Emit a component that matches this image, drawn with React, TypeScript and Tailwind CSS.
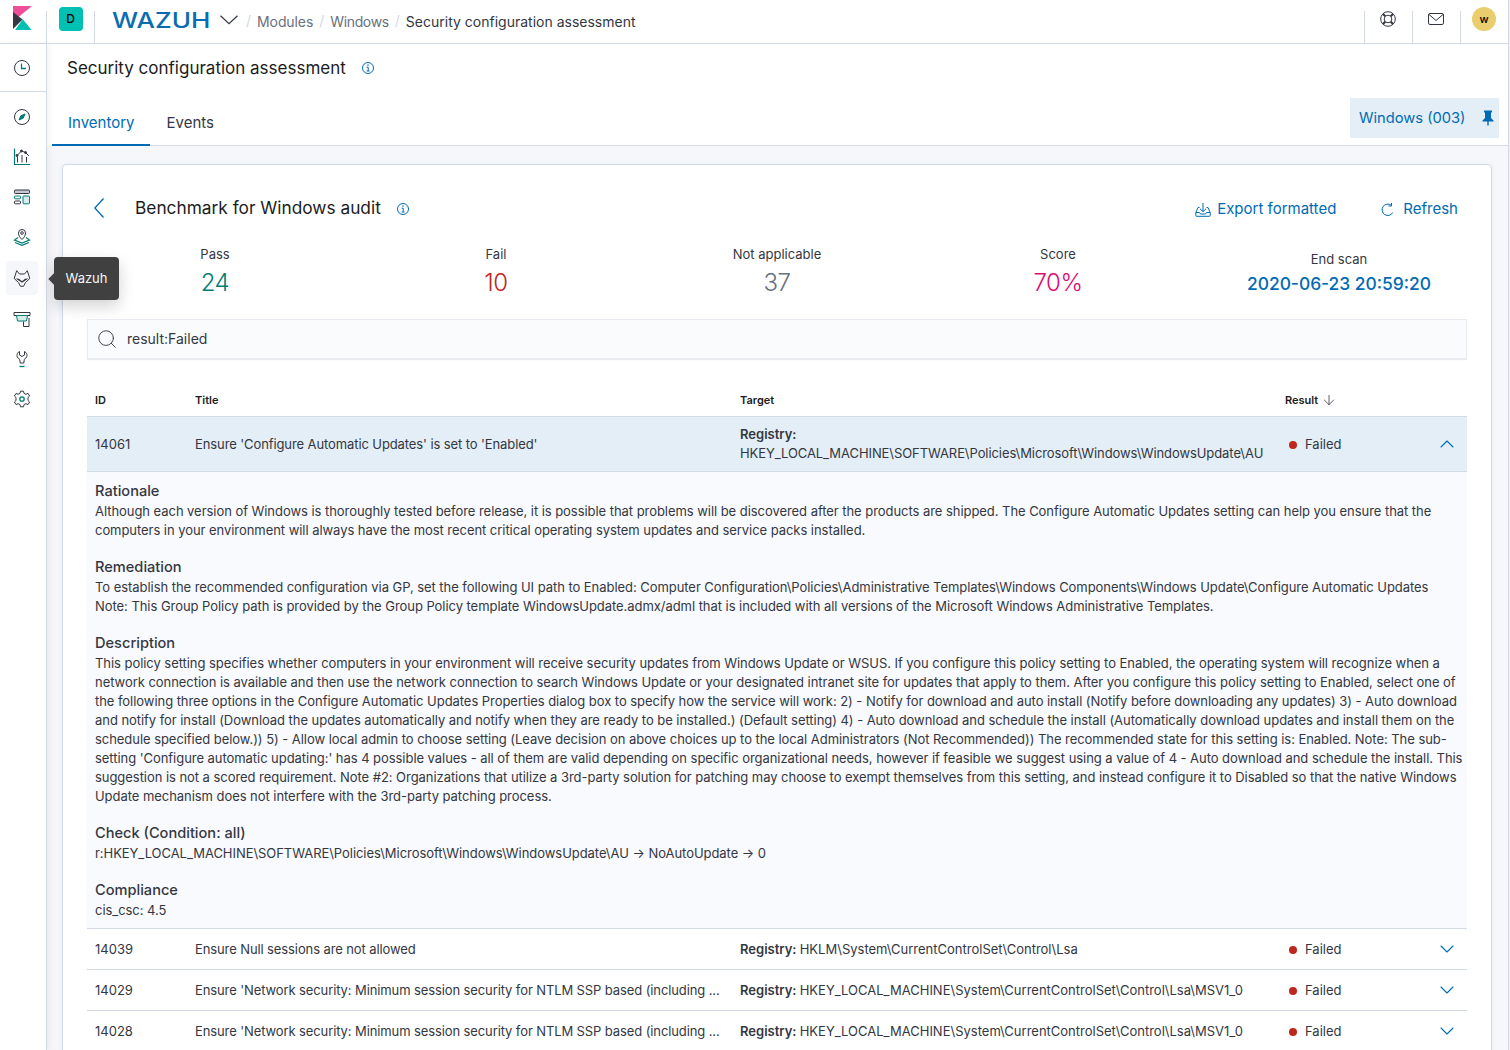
import { ArrowDown, ChevronDown, ChevronUp, Search as SearchIcon } from "lucide-react";

const font = { fontFamily: "Inter, 'Noto Sans', sans-serif" };

const sections = [
  {
    title: "Rationale",
    lines: [
      "Although each version of Windows is thoroughly tested before release, it is possible that problems will be discovered after the products are shipped. The Configure Automatic Updates setting can help you ensure that the computers in your environment will always have the most recent critical operating system updates and service packs installed.",
    ],
  },
  {
    title: "Remediation",
    lines: [
      "To establish the recommended configuration via GP, set the following UI path to Enabled: Computer Configuration\\Policies\\Administrative Templates\\Windows Components\\Windows Update\\Configure Automatic Updates",
      "Note: This Group Policy path is provided by the Group Policy template WindowsUpdate.admx/adml that is included with all versions of the Microsoft Windows Administrative Templates.",
    ],
  },
  {
    title: "Description",
    lines: [
      "This policy setting specifies whether computers in your environment will receive security updates from Windows Update or WSUS. If you configure this policy setting to Enabled, the operating system will recognize when a network connection is available and then use the network connection to search Windows Update or your designated intranet site for updates that apply to them. After you configure this policy setting to Enabled, select one of the following three options in the Configure Automatic Updates Properties dialog box to specify how the service will work: 2) - Notify for download and auto install (Notify before downloading any updates) 3) - Auto download and notify for install (Download the updates automatically and notify when they are ready to be installed.) (Default setting) 4) - Auto download and schedule the install (Automatically download updates and install them on the schedule specified below.)) 5) - Allow local admin to choose setting (Leave decision on above choices up to the local Administrators (Not Recommended)) The recommended state for this setting is: Enabled. Note: The sub-setting 'Configure automatic updating:' has 4 possible values - all of them are valid depending on specific organizational needs, however if feasible we suggest using a value of 4 - Auto download and schedule the install. This suggestion is not a scored requirement. Note #2: Organizations that utilize a 3rd-party solution for patching may choose to exempt themselves from this setting, and instead configure it to Disabled so that the native Windows Update mechanism does not interfere with the 3rd-party patching process.",
    ],
  },
  {
    title: "Check (Condition: all)",
    lines: ["r:HKEY_LOCAL_MACHINE\\SOFTWARE\\Policies\\Microsoft\\Windows\\WindowsUpdate\\AU → NoAutoUpdate → 0"],
  },
  { title: "Compliance", lines: ["cis_csc: 4.5"] },
];

const rows = [
  { id: "14039", title: "Ensure Null sessions are not allowed", target: "HKLM\\System\\CurrentControlSet\\Control\\Lsa" },
  {
    id: "14029",
    title: "Ensure 'Network security: Minimum session security for NTLM SSP based (including ...",
    target: "HKEY_LOCAL_MACHINE\\System\\CurrentControlSet\\Control\\Lsa\\MSV1_0",
  },
  {
    id: "14028",
    title: "Ensure 'Network security: Minimum session security for NTLM SSP based (including ...",
    target: "HKEY_LOCAL_MACHINE\\System\\CurrentControlSet\\Control\\Lsa\\MSV1_0",
  },
];

function InfoIcon() {
  return (
    <svg width="14" height="14" viewBox="0 0 14 14" fill="none" stroke="#006bb4">
      <circle cx="7" cy="7" r="5.5" />
      <path d="M5.6 6.2H7.2V10M5.6 10H8.6" />
      <path d="M7 3.6v1.2" strokeWidth="1.4" />
    </svg>
  );
}

function KibanaLogo() {
  return (
    <svg width="20" height="24" viewBox="0 0 20 24">
      <path d="M0 0H19L0 15.5Z" fill="#f04e98" />
      <path d="M0 6V23L9.5 13.5Z" fill="#343741" />
      <path d="M2 24 9.8 13.2 18.5 24Z" fill="#00bfb3" />
    </svg>
  );
}

function NavIcon({ name }: { name: string }) {
  const dark = "#343741";
  const teal = "#017d73";
  const common = { width: 18, height: 18, viewBox: "0 0 18 18", fill: "none", stroke: dark, strokeWidth: 1 };
  if (name === "clock")
    return (
      <svg {...common}>
        <circle cx="9" cy="9" r="7.5" />
        <path d="M8.5 4.5V9.5H13" stroke={teal} strokeWidth="1.3" />
      </svg>
    );
  if (name === "compass")
    return (
      <svg {...common}>
        <circle cx="9" cy="9" r="7.5" />
        <path d="M12 6 10.2 10.2 6 12 7.8 7.8Z" fill={teal} stroke={teal} />
      </svg>
    );
  if (name === "chart")
    return (
      <svg {...common}>
        <path d="M1.5 0.500V16.5H17" stroke={teal} strokeWidth="1.200" />
        <path d="M4.500 14.500V9M9 14.500V7M13.500 14.500V9" />
        <path d="M4 7.500 8.500 3 12.500 4.500 16 8" />
        <circle cx="4" cy="7.500" r="1" fill={dark} />
        <circle cx="8.500" cy="3" r="1" fill={dark} />
        <circle cx="12.500" cy="4.500" r="1" fill={dark} />
      </svg>
    );
  if (name === "dashboard")
    return (
      <svg {...common}>
        <rect x="1.5" y="2" width="15" height="3.5" rx="0.8" fill="#c4c8d0" />
        <rect x="1.5" y="8" width="6" height="2.8" rx="0.8" stroke={teal} />
        <rect x="1.5" y="13" width="6" height="2.8" rx="0.8" />
        <rect x="10" y="8" width="6.5" height="7.8" rx="0.8" stroke={teal} fill="#d6ecea" />
      </svg>
    );
  if (name === "map")
    return (
      <svg {...common}>
        <path d="M9 11.5C7 9.5 5.5 7.8 5.5 5A3.500 3.500 0 0 1 12.500 5C12.500 7.800 11 9.500 9 11.500Z" />
        <circle cx="9" cy="5" r="1.300" />
        <path d="M5 9.500 1.500 12 9 15 16.500 12 13 9.500M2 14.500 9 17.300 16 14.500" stroke={teal} strokeWidth="1.200" />
      </svg>
    );
  if (name === "wazuh")
    return (
      <svg {...common}>
        <path d="M3.700 1.700 6.500 5H11.500L14.300 1.700 16.800 9.500 12.500 13.500 10.500 17.300H7.500L5.500 13.500 1.200 9.500Z" />
        <path d="M2.500 9.500 6 9.800 9 12.300 12 9.800 15.500 9.500 12 11.800 9 13.800 6 11.800Z" fill={dark} stroke="none" />
      </svg>
    );
  if (name === "devices")
    return (
      <svg {...common}>
        <path d="M1 2.500H17V5.500H1Z" />
        <path d="M3.500 5.500H14.500L13.500 11H4.500Z" fill="#d6ecea" stroke={teal} />
        <path d="M10.500 11.500V16.500H16V8" />
      </svg>
    );
  if (name === "wrench")
    return (
      <svg {...common}>
        <path d="M6.500 1.500C4.500 2.500 4 4 4 5.500 4 7.500 5.500 8.500 6.700 9.300L7.200 13H10.800L11.300 9.300C12.500 8.500 14 7.500 14 5.500 14 4 13.500 2.500 11.500 1.500V5L9 6.500 6.500 5Z" />
        <path d="M6.500 16.500H11.500" stroke={teal} strokeWidth="1.300" />
      </svg>
    );
  return (
    <svg {...common}>
      <path d="M7.500 1.200H10.500L11 3.400 12.900 4.300 15 3.400 16.600 6 15 7.500V10.500L16.600 12 15 14.600 12.900 13.700 11 14.600 10.500 16.800H7.500L7 14.600 5.100 13.700 3 14.600 1.400 12 3 10.500V7.500L1.400 6 3 3.400 5.100 4.300 7 3.400Z" />
      <circle cx="9" cy="9" r="2.200" stroke={teal} strokeWidth="1.300" />
    </svg>
  );
}

function Sidebar() {
  return (
    <aside className="relative z-10 flex h-full w-[47px] shrink-0 flex-col items-start border-r border-[#d3dae6] bg-white shadow-[2px_0_6px_rgba(152,162,179,0.15)]">
      <div className="flex h-[48px] w-full items-center justify-center border-b border-[#d3dae6] pr-[2px]">
        <NavIcon name="clock" />
      </div>
      <div className="ml-[6px] mt-[8px] flex h-[34px] w-[32px] items-center justify-center">
        <NavIcon name="compass" />
      </div>
      <div className="ml-[6px] mt-[6px] flex h-[34px] w-[32px] items-center justify-center">
        <NavIcon name="chart" />
      </div>
      <div className="ml-[6px] mt-[6px] flex h-[34px] w-[32px] items-center justify-center">
        <NavIcon name="dashboard" />
      </div>
      <div className="ml-[6px] mt-[6px] flex h-[34px] w-[32px] items-center justify-center">
        <NavIcon name="map" />
      </div>
      <div className="ml-[6px] mt-[7px] flex h-[34px] w-[32px] items-center justify-center rounded bg-[#f5f7fa]">
        <NavIcon name="wazuh" />
      </div>
      <div className="ml-[6px] mt-[7px] flex h-[34px] w-[32px] items-center justify-center">
        <NavIcon name="devices" />
      </div>
      <div className="ml-[6px] mt-[6px] flex h-[34px] w-[32px] items-center justify-center">
        <NavIcon name="wrench" />
      </div>
      <div className="ml-[6px] mt-[6px] flex h-[34px] w-[32px] items-center justify-center">
        <NavIcon name="gear" />
      </div>
      <div className="absolute left-[54px] top-[213px] flex h-[43px] w-[65px] items-center justify-center rounded bg-[#404040] text-[13px] text-[#f5f7fa] shadow-[0_6px_16px_rgba(0,0,0,0.18)]">
        <span className="absolute left-[-4px] top-[18px] h-[8px] w-[8px] rotate-45 bg-[#404040]" />
        Wazuh
      </div>
    </aside>
  );
}

function TopBar() {
  return (
    <header className="flex h-[44px] shrink-0 items-stretch border-b border-[#d3dae6] bg-white">
      <div className="flex w-[46px] items-start justify-start pl-[13px] pt-[6px]">
        <KibanaLogo />
      </div>
      <div className="mt-[11px] w-px bg-[#d3dae6]" />
      <div className="flex w-[47px] items-start justify-center pt-[7px]">
        <div className="flex h-[24px] w-[24px] items-center justify-center rounded bg-[#00bfb3] text-[12px] font-medium text-black">
          D
        </div>
      </div>
      <div className="mt-[11px] w-px bg-[#d3dae6]" />
      <div className="flex items-center pb-[3px] pl-[17px]">
        <span className="w-[98px] origin-left scale-x-[1.24] text-[21px] font-medium leading-none text-[#0a6cb0]">
          WAZUH
        </span>
        <svg className="ml-[10px]" width="18" height="10" viewBox="0 0 18 10" fill="none" stroke="#343741" strokeWidth="1.200">
          <path d="M0.500 0.800 9 8.800 17.500 0.800" />
        </svg>
        <span className="ml-[8px] text-[14px] text-[#d3dae6]">/</span>
        <span className="ml-[6px] pt-[3px] text-[14px] tracking-[-0.1px] text-[#69707d]">Modules</span>
        <span className="ml-[6px] text-[14px] text-[#d3dae6]">/</span>
        <span className="ml-[6px] pt-[3px] text-[14px] tracking-[-0.35px] text-[#69707d]">Windows</span>
        <span className="ml-[6px] text-[14px] text-[#d3dae6]">/</span>
        <span className="ml-[6px] pt-[3px] text-[14px] text-[#343741]">Security configuration assessment</span>
      </div>
      <div className="ml-auto flex items-stretch">
        <div className="mt-[11px] w-px bg-[#d3dae6]" />
        <div className="flex w-[47px] items-start justify-center pr-[2px] pt-[11px]">
          <svg width="16" height="16" viewBox="0 0 16 16" fill="none" stroke="#343741">
            <circle cx="8" cy="8" r="7.300" />
            <circle cx="8" cy="8" r="3.800" />
            <path d="M3 3 5.300 5.300M13 3 10.700 5.300M3 13 5.300 10.700M13 13 10.700 10.700" strokeWidth="2" />
          </svg>
        </div>
        <div className="mt-[11px] w-px bg-[#d3dae6]" />
        <div className="flex w-[47px] items-start justify-center pr-[2px] pt-[13px]">
          <svg width="16" height="12" viewBox="0 0 16 12" fill="none" stroke="#343741">
            <rect x="0.500" y="0.500" width="15" height="11" rx="1.500" />
            <path d="M1 1.500 8 7.500 15 1.500" />
          </svg>
        </div>
        <div className="mt-[11px] w-px bg-[#d3dae6]" />
        <div className="flex w-[47px] items-start justify-center pr-[1px] pt-[7px]">
          <div className="flex h-[24px] w-[24px] items-center justify-center rounded-full bg-[#eacd6c] text-[11px] font-medium text-black">
            w
          </div>
        </div>
      </div>
    </header>
  );
}

function PageHead() {
  return (
    <div className="bg-white pl-[5px]">
      <div className="flex h-[56px] items-center pb-[8px] pl-[15px]">
        <h1 className="text-[17px] leading-[24px] text-[#1a1c21]">Security configuration assessment</h1>
        <span className="ml-[15px]">
          <InfoIcon />
        </span>
      </div>
      <div className="flex h-[46px] items-start justify-between border-b border-[#d3dae6] pr-[9px]">
        <div className="flex">
          <div className="flex h-[46px] items-center border-b-2 border-[#006bb4] px-[16px] pt-[2px] text-[15px] text-[#006bb4]">
            Inventory
          </div>
          <div className="flex h-[46px] items-center border-b-2 border-transparent px-[16px] pt-[2px] text-[15px] text-[#343741]">
            Events
          </div>
        </div>
        <div className="-mt-[2px] flex h-[40px] w-[149px] items-center justify-between bg-[#e3eef6] pl-[9px] pr-[5px] text-[14.700px] text-[#006bb4]">
          Windows (003)
          <svg width="12" height="16" viewBox="0 0 12 16" fill="#006bb4">
            <path d="M2 0.500H10V2L9 3V8L11.500 10.500V11.500H6.700V15.500H5.300V11.500H0.500V10.500L3 8V3L2 2Z" />
          </svg>
        </div>
      </div>
    </div>
  );
}

function Stats() {
  const items = [
    { label: "Pass", value: "24", cls: "text-[#017d73]" },
    { label: "Fail", value: "10", cls: "text-[#bd271e]" },
    { label: "Not applicable", value: "37", cls: "text-[#69707d]" },
    { label: "Score", value: "70%", cls: "text-[#dd0a73]" },
  ];
  return (
    <div className="-mx-[12.500px] mt-[18px] grid grid-cols-5">
      {items.map((s) => (
        <div key={s.label} className="flex flex-col items-center">
          <div className="h-[18px] text-[13px] leading-[18px] text-[#343741]">{s.label}</div>
          <div className={`mt-[2px] text-[24px] font-light leading-[36px] tracking-[-0.5px] ${s.cls}`}>{s.value}</div>
        </div>
      ))}
      <div className="flex flex-col items-center pt-[5px]">
        <div className="h-[18px] text-[13px] leading-[18px] text-[#343741]">End scan</div>
        <div className="mt-[1px] text-[17.400px] font-medium leading-[30px] text-[#006bb4]">2020-06-23 20:59:20</div>
      </div>
    </div>
  );
}

function FailedCell() {
  return (
    <div className="flex items-center pl-[4px] text-[#343741]">
      <span className="h-[8px] w-[8px] rounded-full bg-[#bd271e]" />
      <span className="ml-[8px]">Failed</span>
    </div>
  );
}

function Table() {
  const cols = "grid grid-cols-[100px_545px_545px_1fr] pl-[8px]";
  return (
    <div className="mt-[22px] text-[13px] text-[#343741]">
      <div className={`${cols} h-[36px] items-center border-b border-[#d3dae6] pt-[3px] text-[11px] font-semibold text-[#1a1c21]`}>
        <div>ID</div>
        <div>Title</div>
        <div>Target</div>
        <div className="flex items-center">
          Result
          <ArrowDown size={16} strokeWidth={1.2} className="ml-[3px] text-[#343741]" />
        </div>
      </div>
      <div className={`${cols} relative h-[55px] items-center border-b border-[#d3dae6] bg-[#e3eef6]`}>
        <div className="pt-[2px]">14061</div>
        <div className="pt-[2px] tracking-[-0.1px]">Ensure 'Configure Automatic Updates' is set to 'Enabled'</div>
        <div className="leading-[19px]">
          <div className="font-semibold">Registry:</div>
          <div className="whitespace-nowrap tracking-[-0.08px]">HKEY_LOCAL_MACHINE\SOFTWARE\Policies\Microsoft\Windows\WindowsUpdate\AU</div>
        </div>
        <div className="pt-[2px]">
          <FailedCell />
        </div>
        <ChevronUp size={24} strokeWidth={1.1} className="absolute right-[8px] top-[15px] text-[#006bb4]" />
      </div>
      <div className="border-b border-[#d3dae6] bg-[#f9fafd] pb-[8px] pl-[8px] pr-[3px] pt-[8px]">
        {sections.map((s) => (
          <div key={s.title} className="mb-[16px] last:mb-0">
            <div className="text-[14.600px] font-medium leading-[22px] text-[#343741]">{s.title}</div>
            {s.lines.map((l) => (
              <p key={l} className="leading-[19px] tracking-[-0.05px]">
                {l}
              </p>
            ))}
          </div>
        ))}
      </div>
      {rows.map((r) => (
        <div key={r.id + r.target + r.title} className={`${cols} relative h-[41px] items-center border-b border-[#d3dae6] pt-[2px]`}>
          <div>{r.id}</div>
          <div className="whitespace-nowrap tracking-[-0.107px]">{r.title}</div>
          <div className="whitespace-nowrap">
            <span className="font-semibold">Registry: </span>
            {r.target}
          </div>
          <FailedCell />
          <ChevronDown size={24} strokeWidth={1.1} className="absolute right-[8px] top-[8px] text-[#006bb4]" />
        </div>
      ))}
    </div>
  );
}

function Card() {
  return (
    <section className="ml-[15px] mr-[16px] mt-[18px] rounded-t-[4px] border border-[#d3dae6] bg-white px-[24px] pt-[24px] shadow-[0_1px_4px_rgba(152,162,179,0.15)]">
      <div className="flex h-[38px] items-center">
        <svg className="ml-[7px]" width="10" height="20" viewBox="0 0 10 20" fill="none" stroke="#006bb4" strokeWidth="1.300">
          <path d="M9.500 0.500 0.800 10 9.500 19.500" />
        </svg>
        <h2 className="ml-[31px] text-[17.300px] leading-[24px] text-[#1a1c21]">Benchmark for Windows audit</h2>
        <span className="ml-[15px] pt-[2px]">
          <InfoIcon />
        </span>
        <div className="ml-auto flex items-center pr-[9px] pt-[3px] text-[15px] text-[#006bb4]">
          <svg className="mr-[-1px]" width="16" height="15" viewBox="0 0 16 15" fill="none" stroke="#006bb4">
            <path d="M4.500 5.500H3L0.800 10.500V13.500C0.800 14 1 14.300 1.500 14.300H14.500C15 14.300 15.200 14 15.200 13.500V10.500L13 5.500H11.500" />
            <path d="M0.800 10.500H4.500L5.500 12H10.500L11.500 10.500H15.200M8 1V9.500M5 6.800 8 9.700 11 6.800" />
          </svg>
          <span className="ml-[7px]">Export formatted</span>
          <svg className="ml-[45px]" width="14" height="14" viewBox="0 0 14 14" fill="none" stroke="#006bb4">
            <path d="M11.800 9.500A5.700 5.700 0 1 1 10.300 2.300" />
            <path d="M10.500 0V3H7.500" />
          </svg>
          <span className="ml-[8px]">Refresh</span>
        </div>
      </div>
      <Stats />
      <div className="mt-[18px] flex h-[40px] items-center border border-[#e8ebf2] bg-[#fafbfd] pb-[1px] pl-[8px] text-[14px] text-[#343741] shadow-[0_1px_1px_rgba(152,162,179,0.2)]">
        <SearchIcon size={22} strokeWidth={1} className="text-[#343741]" />
        <span className="ml-[9px]">result:Failed</span>
      </div>
      <Table />
    </section>
  );
}

export default function App() {
  return (
    <div className="h-[1050px] w-[1510px] overflow-hidden bg-[#eeeeee]" style={font}>
      <div className="flex h-full w-[1509px] flex-col border-r border-[#d3dae6] bg-[#f5f7fa]">
        <TopBar />
        <div className="flex min-h-0 flex-1">
          <Sidebar />
          <main className="min-w-0 flex-1">
            <PageHead />
            <Card />
          </main>
        </div>
      </div>
    </div>
  );
}
